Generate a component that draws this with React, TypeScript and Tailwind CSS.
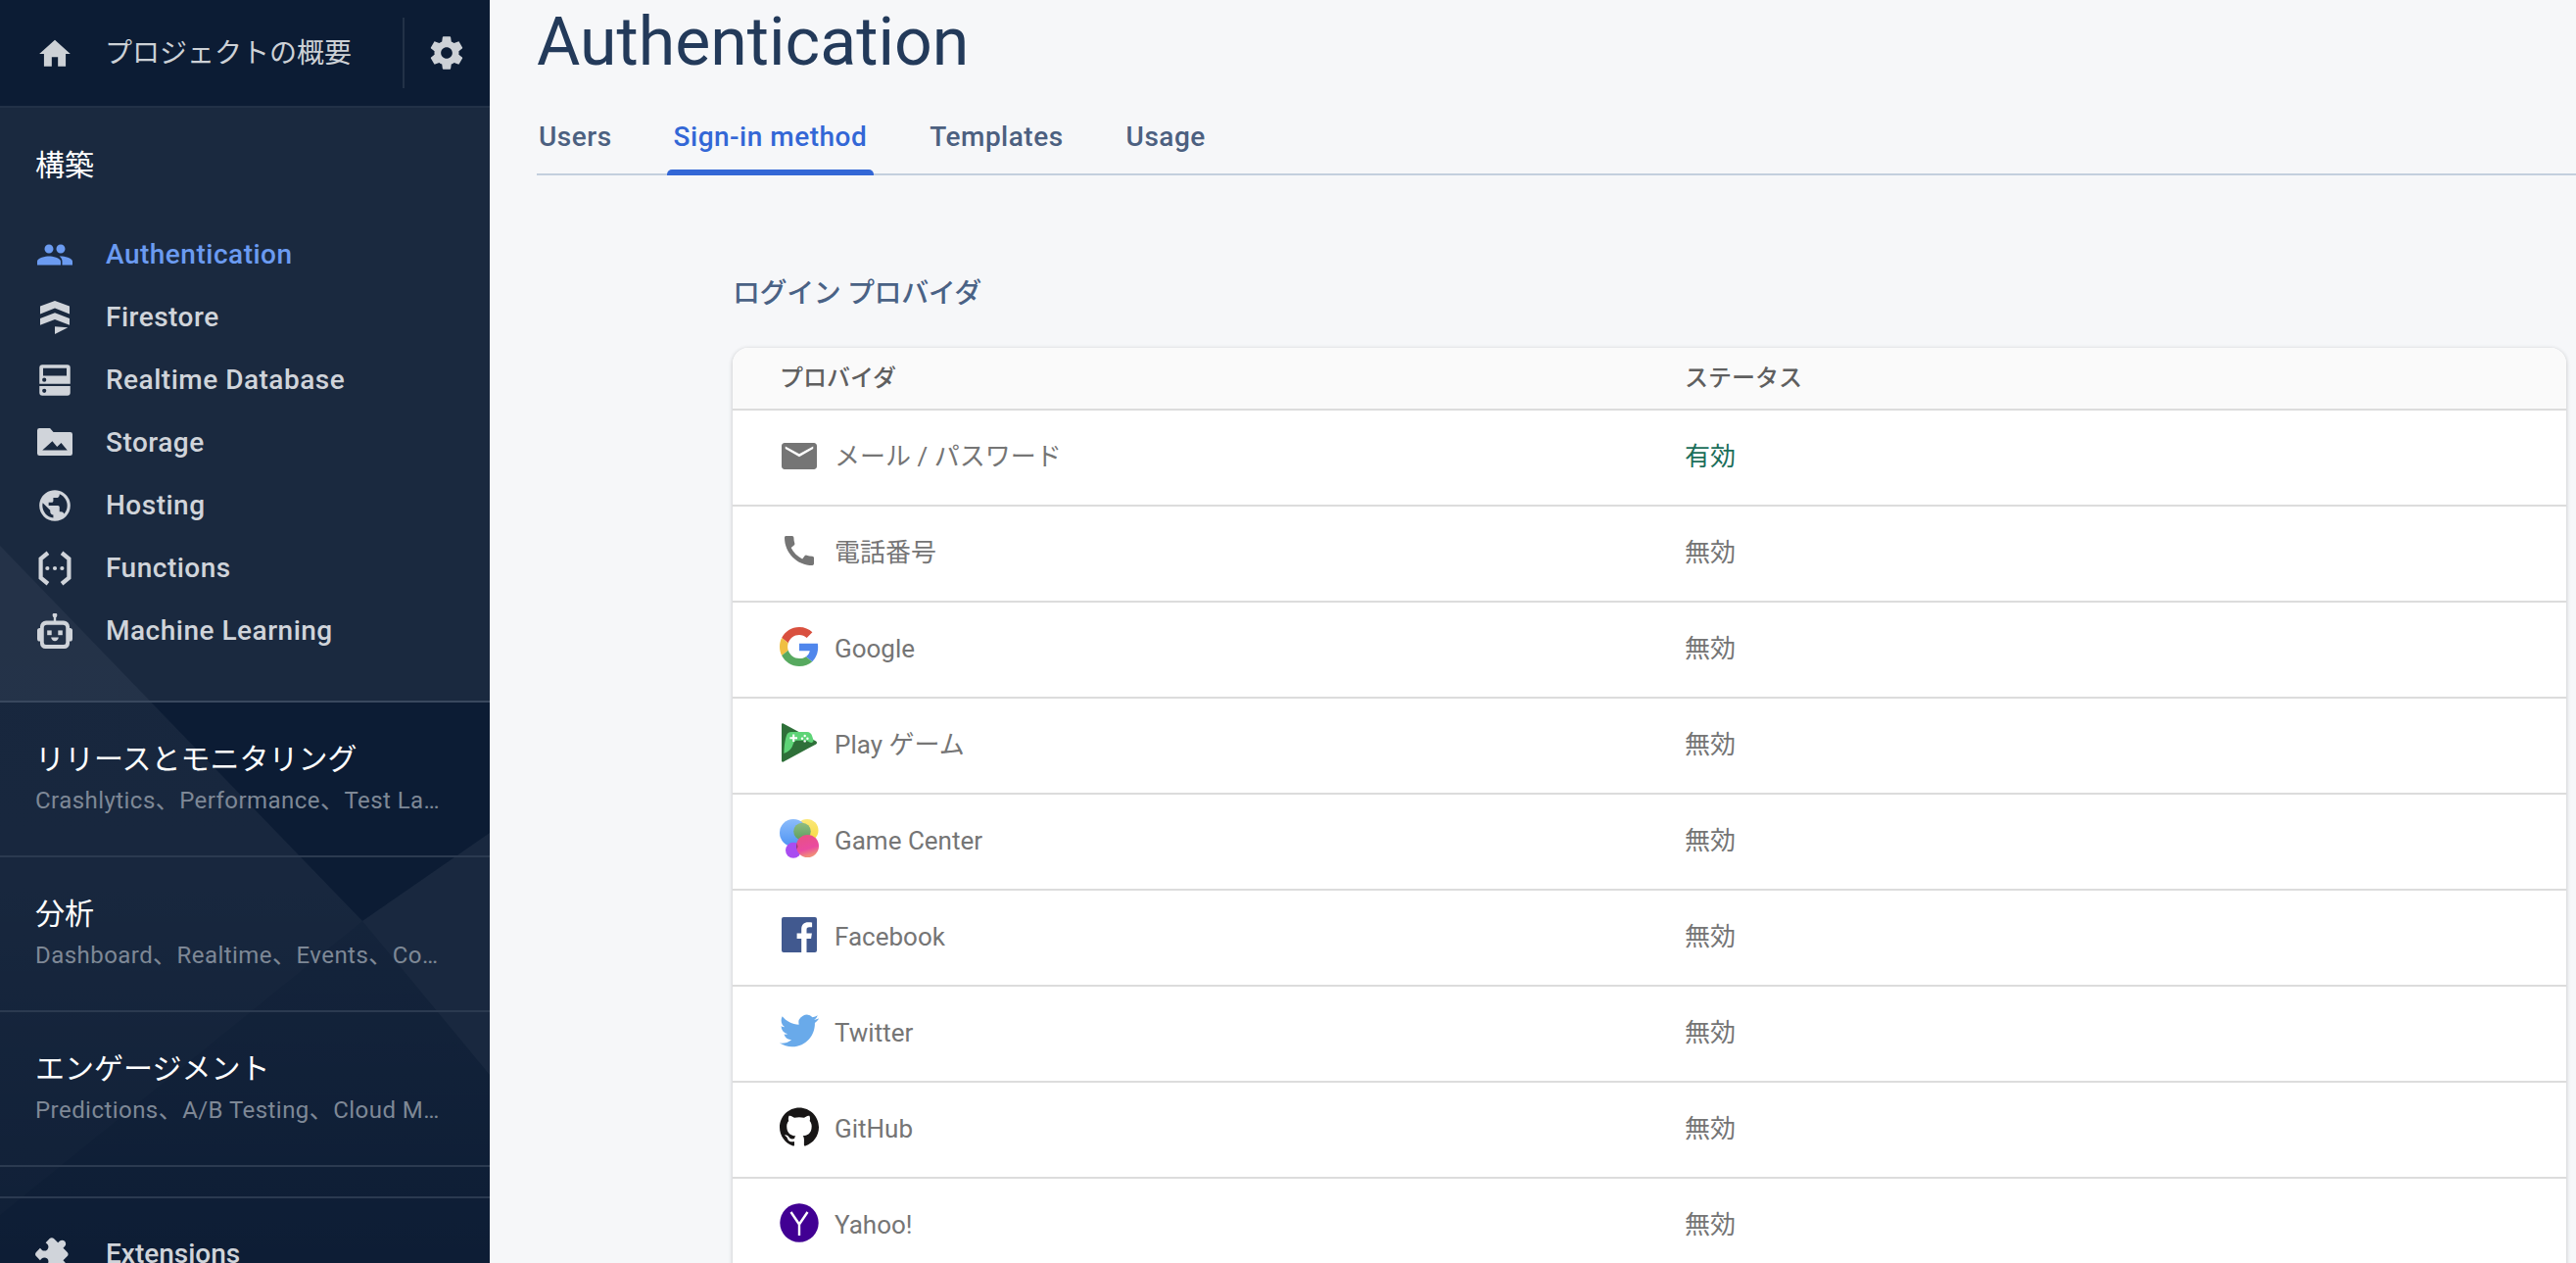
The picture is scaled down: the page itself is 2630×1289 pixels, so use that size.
import React from "react";

const JP = "font-['Roboto','Noto_Sans_CJK_JP',sans-serif]";

const P = ({ d, className = "" }: { d: string; className?: string }) => (
  <svg viewBox="0 0 24 24" className={className} fill="currentColor" fillRule="evenodd">
    <path d={d} />
  </svg>
);

const home = "M10 20v-6h4v6h5v-8h3L12 3 2 12h3v8z";
const gear =
  "M19.43 12.98c.04-.32.07-.64.07-.98s-.03-.66-.07-.98l2.11-1.65c.19-.15.24-.42.12-.64l-2-3.46c-.12-.22-.39-.3-.61-.22l-2.49 1c-.52-.4-1.08-.73-1.69-.98l-.38-2.65C14.46 2.18 14.25 2 14 2h-4c-.25 0-.46.18-.49.42l-.38 2.65c-.61.25-1.17.59-1.69.98l-2.49-1c-.23-.09-.49 0-.61.22l-2 3.46c-.13.22-.07.49.12.64l2.11 1.65c-.04.32-.07.65-.07.98s.03.66.07.98l-2.11 1.65c-.19.15-.24.42-.12.64l2 3.46c.12.22.39.3.61.22l2.49-1c.52.4 1.08.73 1.69.98l.38 2.65c.03.24.24.42.49.42h4c.25 0 .46-.18.49-.42l.38-2.65c.61-.25 1.17-.59 1.69-.98l2.49 1c.23.09.49 0 .61-.22l2-3.46c.12-.22.07-.49-.12-.64l-2.11-1.65zM12 15.5c-1.93 0-3.5-1.57-3.5-3.5s1.57-3.5 3.5-3.5 3.5 1.57 3.5 3.5-1.57 3.5-3.5 3.5z";
const people =
  "M16 11c1.66 0 2.99-1.34 2.99-3S17.66 5 16 5c-1.66 0-3 1.34-3 3s1.34 3 3 3zm-8 0c1.66 0 2.99-1.34 2.99-3S9.66 5 8 5C6.34 5 5 6.34 5 8s1.34 3 3 3zm0 2c-2.33 0-8 1.17-8 3.5V19h16v-2.5c0-2.33-5.67-3.5-8-3.5zm8 0c-.29 0-.62.02-.97.05 1.16.84 1.97 1.97 1.97 3.45V19h7v-2.5c0-2.33-5.67-3.5-8-3.5z";
const firestore =
  "M12 .7 22 4.400v5.200L12 5.600 2 9.600V4.400zM12 8.900l10 3.800v4.400L12 13.300 2 17.100v-4.400zM12 18.200l8.900.7L12 23.300z";
const database =
  "M3.500 1.500h17a2 2 0 0 1 2 2v11h-21v-11a2 2 0 0 1 2-2zM4 3.800v5.200h16V3.800zM4.800 10.400a1.400 1.400 0 1 0 0 2.800 1.400 1.400 0 0 0 0-2.800zM1.500 16h21v4.500a2 2 0 0 1-2 2h-17a2 2 0 0 1-2-2zM4.800 17.800a1.400 1.400 0 1 0 0 2.800 1.400 1.400 0 0 0 0-2.800z";
const storage =
  "M1.500 2h7.200l2.300 2.600h11.500A1.500 1.500 0 0 1 24 6.100v13a1.500 1.500 0 0 1-1.500 1.500h-21A1.500 1.500 0 0 1 0 19.100V3.500A1.500 1.500 0 0 1 1.500 2zM3.500 17h17l-4.200-5-2.800 2.600-3.200-3.800z";
const globe =
  "M12 2C6.480 2 2 6.480 2 12s4.480 10 10 10 10-4.480 10-10S17.520 2 12 2zm-1 17.930c-3.950-.49-7-3.850-7-7.930 0-.62.08-1.210.21-1.790L9 15v1c0 1.100.9 2 2 2v1.930zm6.900-2.540c-.26-.81-1-1.390-1.900-1.390h-1v-3c0-.55-.45-1-1-1H8v-2h2c.55 0 1-.45 1-1V7h2c1.100 0 2-.9 2-2v-.41c2.930 1.190 5 4.060 5 7.410 0 2.080-.8 3.970-2.100 5.390z";
const mail =
  "M22 4H2c-1.100 0-2 .9-2 2v14c0 1.100.9 2 2 2h20c1.100 0 2-.9 2-2V6c0-1.100-.9-2-2-2zM21.500 8 12 13.500 2.500 8V6.300L12 11.500l9.500-5.200z";
const phone =
  "M20.010 15.380c-1.230 0-2.420-.2-3.530-.56-.35-.12-.74-.03-1.010.24l-1.570 1.970c-2.830-1.350-5.480-3.900-6.890-6.830l1.950-1.660c.27-.28.35-.67.24-1.020-.37-1.110-.56-2.300-.56-3.530 0-.54-.45-.99-.99-.99H4.190C3.650 3 3 3.240 3 3.990 3 13.280 10.730 21 20.010 21c.71 0 .99-.63.99-1.180v-3.450c0-.54-.45-.99-.98-.99z";
const puzzle =
  "M20.500 11H19V7c0-1.100-.9-2-2-2h-4V3.500C13 2.120 11.880 1 10.500 1S8 2.120 8 3.500V5H4c-1.100 0-1.990.9-1.990 2v3.800H3.500c1.490 0 2.700 1.210 2.700 2.700s-1.210 2.700-2.700 2.700H2V20c0 1.100.9 2 2 2h3.800v-1.500c0-1.490 1.210-2.700 2.700-2.700 1.490 0 2.700 1.210 2.700 2.700V22H17c1.100 0 2-.9 2-2v-4h1.500c1.380 0 2.500-1.120 2.500-2.500S21.880 11 20.500 11z";

const Functions = ({ className = "" }: { className?: string }) => (
  <svg viewBox="0 0 24 24" className={className} fill="none" stroke="currentColor">
    <path d="M7.300 1.500 2.400 5.500v13l4.900 4M16.700 1.500l4.900 4v13l-4.900 4" strokeWidth="2.800" />
    <circle cx="6.900" cy="12" r="1.400" fill="currentColor" stroke="none" />
    <circle cx="12" cy="12" r="1.400" fill="currentColor" stroke="none" />
    <circle cx="16.900" cy="12" r="1.400" fill="currentColor" stroke="none" />
  </svg>
);

const Robot = ({ className = "" }: { className?: string }) => (
  <svg viewBox="0 0 24 24" className={className} fill="currentColor" fillRule="evenodd">
    <circle cx="12" cy="1.300" r="1.600" />
    <rect x="11.200" y="2" width="1.600" height="4" />
    <path d="M6 5h12a4 4 0 0 1 4 4v1h.3a1.700 1.700 0 0 1 1.700 1.700v5.600a1.700 1.700 0 0 1-1.700 1.700H22v1.500a3.500 3.500 0 0 1-3.500 3.500h-13A3.500 3.500 0 0 1 2 20.500V19h-.3A1.700 1.700 0 0 1 0 17.300v-5.600A1.700 1.700 0 0 1 1.700 10H2V9a4 4 0 0 1 4-4zM6.500 7.800A2 2 0 0 0 4.500 9.800v10a1.500 1.500 0 0 0 1.500 1.500h12a1.500 1.500 0 0 0 1.500-1.500v-10a2 2 0 0 0-2-2z" />
    <rect x="6.800" y="11.600" width="3" height="3.200" />
    <rect x="14.200" y="11.600" width="3" height="3.200" />
    <path d="M9.400 16.400h5.200c-.3 1.600-1.300 2.400-2.600 2.400s-2.300-.8-2.600-2.400z" />
  </svg>
);

const GoogleG = () => (
  <svg viewBox="0 0 48 48" className="w-10 h-10">
    <path fill="#d9503f" d="M24 9.500c3.540 0 6.710 1.220 9.210 3.600l6.850-6.850C35.900 2.380 30.470 0 24 0 14.620 0 6.510 5.380 2.560 13.220l7.980 6.190C12.430 13.720 17.740 9.500 24 9.500z" />
    <path fill="#4f86ec" d="M46.980 24.550c0-1.570-.15-3.090-.38-4.550H24v9.020h12.940c-.58 2.960-2.260 5.480-4.780 7.180l7.730 6c4.510-4.180 7.090-10.360 7.090-17.650z" />
    <path fill="#f0bf42" d="M10.530 28.590c-.5-1.450-.78-2.990-.78-4.590s.27-3.140.78-4.590l-7.980-6.190C.92 16.460 0 20.120 0 24c0 3.880.92 7.540 2.560 10.780l7.970-6.190z" />
    <path fill="#57a95f" d="M24 48c6.480 0 11.930-2.130 15.890-5.810l-7.730-6c-2.150 1.450-4.920 2.300-8.160 2.300-6.260 0-11.570-4.220-13.470-9.910l-7.980 6.190C6.510 42.620 14.620 48 24 48z" />
  </svg>
);

const PlayGames = () => (
  <svg viewBox="0 0 40 40" className="w-10 h-10">
    <path fill="#2e7039" d="M2 1.500c0-1 .9-1.500 1.800-1L37.200 18.600c1.100.7 1.100 2.100 0 2.800L3.800 39.500c-.9.500-1.800 0-1.800-1z" />
    <path fill="#5ed477" d="M12 9h16c2.800 0 4.300 1.800 5 3.800l1.400 4.200c.5 2-1 3.500-3 2.800-2-.6-3.500-2-5.500-2h-8c-3 0-3.500 2.500-5 6-.8 2-3.800 5.500-8.500 7.200 0-6 1-14 2.500-18C7.500 10.500 9.500 9 12 9z" />
    <path fill="#fff" d="M13.200 11.500h2v2.800h2.800v2h-2.800v2.800h-2v-2.800h-2.800v-2h2.800z" />
    <circle cx="25.700" cy="13" r="1.200" fill="#fff" />
    <circle cx="25.700" cy="18.400" r="1.200" fill="#fff" />
    <circle cx="23" cy="15.700" r="1.200" fill="#fff" />
    <circle cx="28.400" cy="15.700" r="1.200" fill="#fff" />
  </svg>
);

const GameCenter = () => (
  <svg viewBox="0 0 40 40" className="w-10 h-10">
    <defs>
      <linearGradient id="gcBlue" x1="0" y1="0" x2="0" y2="1">
        <stop offset="0" stopColor="#8cbcfb" />
        <stop offset="1" stopColor="#4f94f4" />
      </linearGradient>
      <linearGradient id="gcYellow" x1="0" y1="0" x2="0" y2="1">
        <stop offset="0" stopColor="#fbe878" />
        <stop offset="1" stopColor="#f7d93f" />
      </linearGradient>
      <linearGradient id="gcGreen" x1="0" y1="0" x2="0" y2="1">
        <stop offset="0" stopColor="#8fbc80" />
        <stop offset="1" stopColor="#5c9e62" />
      </linearGradient>
      <linearGradient id="gcPink" x1="0" y1="0" x2="0.300" y2="1">
        <stop offset="0" stopColor="#e8527f" />
        <stop offset="0.700" stopColor="#ea4aa0" />
        <stop offset="1" stopColor="#f08a7a" />
      </linearGradient>
    </defs>
    <circle cx="28" cy="11.500" r="11.500" fill="url(#gcYellow)" />
    <circle cx="14" cy="14" r="14" fill="url(#gcBlue)" />
    <circle cx="23" cy="12.500" r="8.800" fill="url(#gcGreen)" />
    <circle cx="14" cy="31.800" r="8" fill="#a94cf0" />
    <circle cx="28.500" cy="27.500" r="11.500" fill="url(#gcPink)" />
    <path d="M17.600 24.300a11.500 11.500 0 0 0 0 6.800 8 8 0 0 0 0-6.800z" fill="#8a3a72" />
  </svg>
);

const Facebook = () => (
  <svg viewBox="0 0 40 40" className="w-10 h-10">
    <rect x="2" y="2" width="36" height="36" rx="2" fill="#41598f" />
    <path fill="#fff" d="M27.500 38V24h4.600l.8-5.500h-5.400V15c0-1.600.5-2.700 2.800-2.700h2.800V7.400c-.5-.1-2.200-.2-4-.2-4.100 0-6.900 2.500-6.900 7v4.300h-4.600V24h4.600v14z" />
  </svg>
);

const Twitter = () => (
  <svg viewBox="0 0 24 24" className="w-10 h-10" fill="#69aaea">
    <path d="M23.953 4.570a10 10 0 01-2.825.775 4.958 4.958 0 002.163-2.723c-.951.555-2.005.959-3.127 1.184a4.920 4.920 0 00-8.384 4.482C7.690 8.095 4.067 6.130 1.640 3.162a4.822 4.822 0 00-.666 2.475c0 1.710.870 3.213 2.188 4.096a4.904 4.904 0 01-2.228-.616v.060a4.923 4.923 0 003.946 4.827 4.996 4.996 0 01-2.212.085 4.936 4.936 0 004.604 3.417 9.867 9.867 0 01-6.102 2.105c-.390 0-.779-.023-1.170-.067a13.995 13.995 0 007.557 2.209c9.053 0 13.998-7.496 13.998-13.985 0-.210 0-.420-.015-.630A9.935 9.935 0 0024 4.590z" />
  </svg>
);

const GitHub = () => (
  <svg viewBox="0 0 24 24" className="w-10 h-10" fill="#181616">
    <path d="M12 .297c-6.630 0-12 5.373-12 12 0 5.303 3.438 9.800 8.205 11.385.600.113.820-.258.820-.577 0-.285-.010-1.040-.015-2.040-3.338.724-4.042-1.610-4.042-1.610C4.422 18.070 3.633 17.700 3.633 17.700c-1.087-.744.084-.729.084-.729 1.205.084 1.838 1.236 1.838 1.236 1.070 1.835 2.809 1.305 3.495.998.108-.776.417-1.305.760-1.605-2.665-.300-5.466-1.332-5.466-5.930 0-1.310.465-2.380 1.235-3.220-.135-.303-.540-1.523.105-3.176 0 0 1.005-.322 3.300 1.230.960-.267 1.980-.399 3-.405 1.020.006 2.040.138 3 .405 2.280-1.552 3.285-1.230 3.285-1.230.645 1.653.240 2.873.120 3.176.765.840 1.230 1.910 1.230 3.220 0 4.610-2.805 5.625-5.475 5.920.420.360.810 1.096.810 2.220 0 1.606-.015 2.896-.015 3.286 0 .315.210.690.825.570C20.565 22.092 24 17.592 24 12.297c0-6.627-5.373-12-12-12" />
  </svg>
);

const Yahoo = () => (
  <svg viewBox="0 0 40 40" className="w-10 h-10">
    <circle cx="20" cy="20" r="19.700" fill="#410093" />
    <path d="M11.500 9 20 21.500 28.500 9M20 21.500V33" stroke="#fff" strokeWidth="2.400" fill="none" />
  </svg>
);

const Mail = () => (
  <div className="w-10 h-10 flex items-center justify-center text-[#757575]">
    <P d={mail} className="w-9 h-9 -mt-[1px]" />
  </div>
);

const Phone = () => (
  <div className="w-10 h-10 flex items-center justify-center text-[#757575]">
    <P d={phone} className="w-10 h-10" />
  </div>
);

const rows: { icon: React.ReactNode; name: string; on?: boolean }[] = [
  { icon: <Mail />, name: "メール / パスワード", on: true },
  { icon: <Phone />, name: "電話番号" },
  { icon: <GoogleG />, name: "Google" },
  { icon: <PlayGames />, name: "Play ゲーム" },
  { icon: <GameCenter />, name: "Game Center" },
  { icon: <Facebook />, name: "Facebook" },
  { icon: <Twitter />, name: "Twitter" },
  { icon: <GitHub />, name: "GitHub" },
  { icon: <Yahoo />, name: "Yahoo!" },
];

const nav: { icon: React.ReactNode; label: string; active?: boolean }[] = [
  { icon: <P d={people} className="w-9 h-9 shrink-0" />, label: "Authentication", active: true },
  { icon: <P d={firestore} className="w-9 h-9 shrink-0" />, label: "Firestore" },
  { icon: <P d={database} className="w-9 h-9 shrink-0" />, label: "Realtime Database" },
  { icon: <P d={storage} className="w-9 h-9 shrink-0" />, label: "Storage" },
  { icon: <P d={globe} className="w-[38px] h-[38px] shrink-0" />, label: "Hosting" },
  { icon: <Functions className="w-9 h-9 shrink-0" />, label: "Functions" },
  { icon: <Robot className="w-9 h-9 shrink-0" />, label: "Machine Learning" },
];

const groups = [
  { title: "リリースとモニタリング", sub: "Crashlytics、Performance、Test La…" },
  { title: "分析", sub: "Dashboard、Realtime、Events、Co…" },
  { title: "エンゲージメント", sub: "Predictions、A/B Testing、Cloud M…" },
];

const Sidebar = () => (
  <aside className={`relative w-[500px] shrink-0 h-full overflow-hidden bg-[#0c1c34] ${JP}`}>
    <svg viewBox="0 0 500 1289" className="absolute inset-0 w-[500px] h-[1289px]">
      <defs>
        <linearGradient id="sbLeft" gradientUnits="userSpaceOnUse" x1="0" y1="557" x2="0" y2="1240">
          <stop offset="0" stopColor="#fff" stopOpacity="0.045" />
          <stop offset="0.5" stopColor="#fff" stopOpacity="0.05" />
          <stop offset="1" stopColor="#fff" stopOpacity="0.02" />
        </linearGradient>
        <linearGradient id="sbBottom" gradientUnits="userSpaceOnUse" x1="0" y1="940" x2="0" y2="1289">
          <stop offset="0" stopColor="#fff" stopOpacity="0.035" />
          <stop offset="1" stopColor="#fff" stopOpacity="0.005" />
        </linearGradient>
      </defs>
      <polygon points="0,557 370,940 0,1240" fill="url(#sbLeft)" />
      <polygon points="370,940 500,850 500,1097" fill="#fff" fillOpacity="0.055" />
      <polygon points="0,1240 370,940 500,1097 500,1289 0,1289" fill="url(#sbBottom)" />
    </svg>
    <div className="relative flex flex-col">
      <div className="h-[110px] bg-[#0c1c34] border-b-2 border-[#223147] flex items-center">
        <div className="w-[107px] pl-[37px] shrink-0 text-[#cdd1d6] mt-[2px]">
          <P d={home} className="w-[38px] h-[38px]" />
        </div>
        <div className="w-[304px] text-[28px] leading-[36px] text-[#cdd1d6] mt-[1px]">プロジェクトの概要</div>
        <div className="w-[2px] h-[72px] bg-[#223147]" />
        <div className="flex-1 flex justify-center text-[#cdd1d6] pr-[1px]">
          <P d={gear} className="w-10 h-10" />
        </div>
      </div>
      <div className="h-[607px] bg-white/[0.06] border-b-2 border-[#39485e] flex flex-col">
        <div className="pl-[36px] pt-[41px] h-[118px] text-[30px] leading-[36px] text-white">構築</div>
        {nav.map((n) => (
          <div key={n.label} className={`h-[64px] flex items-center ${n.active ? "text-[#6b9bf1]" : "text-[#d0d4da]"}`}>
            <div className="w-[108px] pl-[38px] shrink-0 h-9 flex items-center justify-center pr-[34px]">{n.icon}</div>
            <div className="text-[28px] leading-[36px] font-medium tracking-[0.5px]">{n.label}</div>
          </div>
        ))}
      </div>
      {groups.map((g) => (
        <div key={g.title} className="h-[158px] border-b-2 border-[#2b3a50] pl-[36px] pt-[38px]">
          <div className="text-[30px] leading-[40px] text-white">{g.title}</div>
          <div className="whitespace-nowrap text-[24px] leading-[32px] mt-[6px] text-[#7e8896] tracking-[0.45px]">{g.sub}</div>
        </div>
      ))}
      <div className="h-[32px] border-b-2 border-[#2b3a50]" />
      <div className="h-[64px] mt-[25px] flex items-center text-[#d0d4da]">
        <div className="w-[108px] pl-[38px] shrink-0">
          <P d={puzzle} className="w-9 h-9 rotate-45" />
        </div>
        <div className="text-[28px] leading-[36px] font-medium">Extensions</div>
      </div>
    </div>
  </aside>
);

const tabs = [
  { label: "Users", cls: "pl-[2px] pr-[7px] mr-[49px] text-[#4c6080]", active: false },
  { label: "Sign-in method", cls: "px-[7px] mr-[50px] text-[#3367d6]", active: true },
  { label: "Templates", cls: "px-[7px] mr-[50px] text-[#4c6080]", active: false },
  { label: "Usage", cls: "px-[7px] text-[#4c6080]", active: false },
];

const Main = () => (
  <main className={`flex-1 min-w-0 h-full overflow-hidden bg-[#f6f7f9] pl-[48px] ${JP}`}>
    <h1 className="h-[88px] text-[68px] leading-[86px] font-normal text-[#233a5a]">Authentication</h1>
    <div className="h-[91px] border-b-2 border-[#c3cfdd] flex">
      {tabs.map((t) => (
        <div key={t.label} className={`relative h-[91px] pt-[34px] text-[28px] leading-[36px] font-medium tracking-[0.5px] ${t.cls}`}>
          {t.label}
          {t.active && <div className="absolute left-0 right-0 bottom-0 h-[6px] bg-[#3367d6] rounded-t-[5px]" />}
        </div>
      ))}
    </div>
    <div className="pl-[200px] pr-[10px] pt-[100px]">
      <div className="h-[76px] pt-[2px] text-[28px] leading-[38px] font-medium tracking-[-0.4px] text-[#4a6285]">ログイン プロバイダ</div>
      <div className="bg-white rounded-t-[16px] shadow-[0_1px_4px_rgba(60,64,67,0.3)]">
        <div className="h-[64px] bg-[#fafafa] rounded-t-[16px] border-b-2 border-[#dcdcdc] flex items-center text-[24px] font-medium text-[#5f5f5f]">
          <div className="w-[972px] pl-[48px]">プロバイダ</div>
          <div>ステータス</div>
        </div>
        {rows.map((r) => (
          <div key={r.name} className="h-[98px] border-b-2 border-[#dcdcdc] flex items-center text-[26px] text-[#757575]">
            <div className="w-[972px] pl-[48px] flex items-center">
              <div className="w-10 h-10 -mt-[6px] mr-[16px] shrink-0 flex items-center justify-center">{r.icon}</div>
              <div className="leading-[36px] -mt-[2px]">{r.name}</div>
            </div>
            <div className={`-mt-[2px] ${r.on ? "text-[#1b6e5a]" : ""}`}>{r.on ? "有効" : "無効"}</div>
          </div>
        ))}
      </div>
    </div>
  </main>
);

export default function App() {
  return (
    <div className="flex w-full h-[1289px] overflow-hidden">
      <Sidebar />
      <Main />
    </div>
  );
}
